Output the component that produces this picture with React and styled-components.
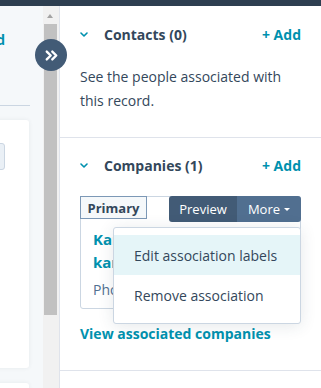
import React from "react";
import styled, { createGlobalStyle } from "styled-components";
import { ChevronsRight } from "lucide-react";

const GlobalStyle = createGlobalStyle`
  html, body {
    margin: 0;
    padding: 0;
  }
  body {
    font-family: "Open Sans", "Liberation Sans", sans-serif;
    color: #33475b;
    background: #ffffff;
  }
`;

function Caret() {
  return (
    <CaretIcon viewBox="0 0 8 5" width="8" height="5">
      <path d="M1 1l3 3 3-3" fill="none" stroke="#0091ae" strokeWidth="1.6" strokeLinecap="round" strokeLinejoin="round" />
    </CaretIcon>
  );
}

function App() {
  return (
    <Page>
      <GlobalStyle />
      <TopBar />
      <Main>
        <LeftPane>
          <LeftInner>
            <LeftHeader>
              <LeftLink>+ Add</LeftLink>
            </LeftHeader>
            <LeftCard>
              <GhostButton>Edit</GhostButton>
            </LeftCard>
            <LeftCard $short />
          </LeftInner>
        </LeftPane>
        <Scrollbar>
          <UpArrow />
          <Thumb />
        </Scrollbar>
        <CollapseButton>
          <ChevronsRight size={19} strokeWidth={3} color="#ffffff" />
        </CollapseButton>
        <RightPane>
          <Section>
            <SectionHeader>
              <Caret />
              <SectionTitle>Contacts (0)</SectionTitle>
              <AddLink>+ Add</AddLink>
            </SectionHeader>
            <Description>See the people associated with this record.</Description>
          </Section>
          <Section $tight>
            <SectionHeader>
              <Caret />
              <SectionTitle>Companies (1)</SectionTitle>
              <AddLink>+ Add</AddLink>
            </SectionHeader>
            <Card>
              <CardTop>
                <Tag>Primary</Tag>
                <ButtonGroup>
                  <GroupButton $width={68}>Preview</GroupButton>
                  <GroupButton $width={64} $light>
                    More
                    <SmallCaret />
                  </GroupButton>
                </ButtonGroup>
              </CardTop>
              <CardBody>
                <CompanyName>Karbon Labs</CompanyName>
                <CompanyName>karbonlabs.io</CompanyName>
                <Phone>Phone: +1 555 0142</Phone>
              </CardBody>
              <Dropdown>
                <MenuItem $active>Edit association labels</MenuItem>
                <MenuItem>Remove association</MenuItem>
              </Dropdown>
            </Card>
            <ViewLink>View associated companies</ViewLink>
          </Section>
        </RightPane>
      </Main>
    </Page>
  );
}

export default App;

const Page = styled.div`
  position: relative;
  width: 321px;
  height: 388px;
  overflow: hidden;
  display: flex;
  flex-direction: column;
`;

const TopBar = styled.div`
  height: 6px;
  flex: none;
  background: #2d3e50;
`;

const Main = styled.div`
  flex: 1;
  display: flex;
  min-height: 0;
`;

const LeftPane = styled.div`
  width: 43px;
  flex: none;
  background: #f5f8fa;
  overflow: hidden;
`;

const LeftInner = styled.div`
  width: 330px;
  margin-left: -300px;
  display: flex;
  flex-direction: column;
`;

const LeftHeader = styled.div`
  box-sizing: border-box;
  height: 100px;
  padding: 24px 25px 0 0;
  display: flex;
  justify-content: flex-end;
  border-bottom: 1px solid #cbd6e2;
`;

const LeftLink = styled.span`
  font-size: 14px;
  line-height: 20px;
  font-weight: 700;
  color: #0091ae;
`;

const LeftCard = styled.div`
  box-sizing: border-box;
  margin: ${(p) => (p.$short ? "15px" : "14px")} 1px 0 0;
  height: ${(p) => (p.$short ? "40px" : "248px")};
  padding: 23px 24px 0 0;
  display: flex;
  justify-content: flex-end;
  align-items: flex-start;
  background: #ffffff;
  border-radius: 3px;
  box-shadow: 0 0 4px rgba(45, 62, 80, 0.08);
`;

const GhostButton = styled.div`
  height: 27px;
  padding: 0 16px;
  box-sizing: border-box;
  background: #eaf0f6;
  border: 1px solid #cbd6e2;
  border-radius: 3px;
  font-size: 13px;
  line-height: 25px;
`;

const Scrollbar = styled.div`
  width: 16px;
  flex: none;
  background: #f1f1f1;
  display: flex;
  flex-direction: column;
  align-items: flex-start;
`;

const UpArrow = styled.div`
  margin: 8px 0 0 4px;
  width: 0;
  height: 0;
  border-left: 3.5px solid transparent;
  border-right: 3.5px solid transparent;
  border-bottom: 4px solid #a3a3a3;
`;

const Thumb = styled.div`
  margin: 6px 0 0 1px;
  width: 13px;
  height: 291px;
  background: #c1c1c1;
`;

const CollapseButton = styled.div`
  position: absolute;
  left: 35px;
  top: 39px;
  width: 32px;
  height: 32px;
  border-radius: 50%;
  background: #425b76;
  display: flex;
  align-items: center;
  justify-content: center;
`;

const RightPane = styled.div`
  flex: 1;
  display: flex;
  flex-direction: column;
  background: #ffffff;
  border-left: 1px solid #dfe3eb;
`;

const Section = styled.div`
  padding: ${(p) => (p.$tight ? "15px" : "16px")} 20px 24px;
  border-bottom: 1px solid #dfe3eb;
`;

const SectionHeader = styled.div`
  display: flex;
  align-items: center;
  height: 24px;
`;

const CaretIcon = styled.svg`
  flex: none;
  margin-right: 16px;
`;

const SectionTitle = styled.span`
  flex: 1;
  font-size: 14px;
  font-weight: 700;
  color: #33475b;
`;

const AddLink = styled.span`
  font-size: 14px;
  font-weight: 700;
  color: #0091ae;
`;

const Description = styled.p`
  margin: 19px 0 0;
  font-size: 14px;
  line-height: 24px;
  color: #33475b;
`;

const Card = styled.div`
  position: relative;
  margin-top: 19px;
  border: 1px solid #cbd6e2;
  border-radius: 3px;
`;

const CardTop = styled.div`
  display: flex;
  justify-content: space-between;
  align-items: flex-start;
  margin: -1px -1px 0;
`;

const Tag = styled.div`
  box-sizing: border-box;
  width: 67px;
  height: 23px;
  display: flex;
  align-items: center;
  justify-content: center;
  background: #f5f8fa;
  border: 1px solid #7c98b6;
  font-size: 13px;
  font-weight: 700;
  color: #33475b;
`;

const ButtonGroup = styled.div`
  display: flex;
  height: 26px;
  border-radius: 3px;
  overflow: hidden;
`;

const GroupButton = styled.div`
  width: ${(p) => p.$width}px;
  display: flex;
  align-items: center;
  justify-content: center;
  gap: 4px;
  background: ${(p) => (p.$light ? "#516f90" : "#425b76")};
  color: #ffffff;
  font-size: 13px;
`;

const SmallCaret = styled.span`
  width: 0;
  height: 0;
  border-left: 3px solid transparent;
  border-right: 3px solid transparent;
  border-top: 3px solid #ffffff;
`;

const CardBody = styled.div`
  padding: 6px 12px 6px;
`;

const CompanyName = styled.div`
  font-size: 15px;
  line-height: 23px;
  font-weight: 700;
  color: #0091ae;
`;

const Phone = styled.div`
  margin-top: 4px;
  font-size: 14px;
  line-height: 24px;
  color: #516f90;
`;

const Dropdown = styled.div`
  position: absolute;
  top: 30px;
  left: 32px;
  right: -1px;
  padding: 7px 0 8px;
  background: #ffffff;
  border: 1px solid #cbd6e2;
  border-radius: 3px;
  box-shadow: 0 2px 16px rgba(45, 62, 80, 0.12);
`;

const MenuItem = styled.div`
  height: 40px;
  padding-left: 20px;
  display: flex;
  align-items: center;
  font-size: 14px;
  color: #33475b;
  background: ${(p) => (p.$active ? "#e5f5f8" : "transparent")};
`;

const ViewLink = styled.div`
  margin-top: 13px;
  font-size: 14px;
  line-height: 24px;
  font-weight: 700;
  color: #0091ae;
`;
